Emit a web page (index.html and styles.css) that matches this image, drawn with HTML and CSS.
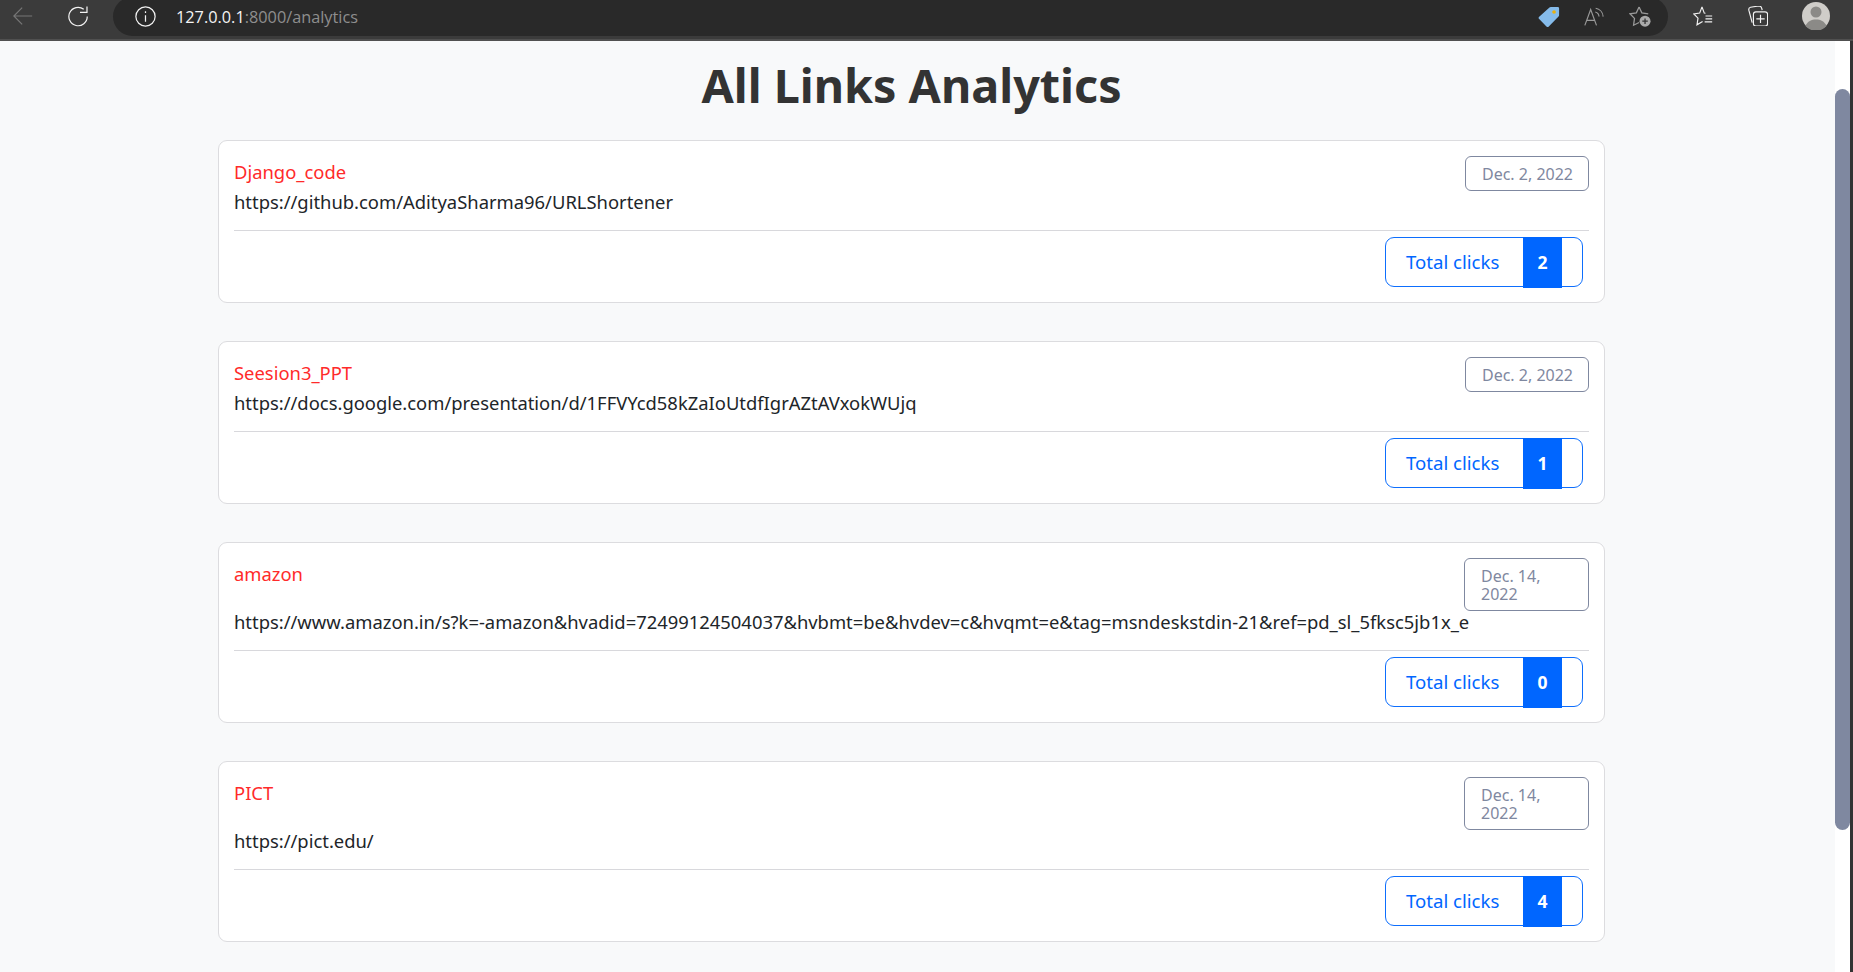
FILE: index.html
```html
<!DOCTYPE html>
<html lang="en">
<head>
  <meta charset="UTF-8" />
  <title>All Links Analytics</title>
  <link rel="stylesheet" href="styles.css">
</head>
<body>

  <header class="toolbar">
    <svg class="tool-icon back" viewBox="0 0 24 24"><path d="M23 12H1M11 2L1 12l10 10"/></svg>
    <svg class="tool-icon reload" viewBox="0 0 24 24"><path d="M22 12a10.500 10.500 0 1 1-4-8.200M21.700 .6v6.800h-8"/></svg>
    <div class="omnibox">
      <svg class="tool-icon info" viewBox="0 0 24 24"><circle cx="12" cy="12" r="11"/><path d="M12 10.500v7.500M12 6v2"/></svg>
      <span class="url"><span class="host">127.0.0.1</span>:8000/analytics</span>
      <svg class="tag" viewBox="0 0 24 24"><path d="M14 1h7.500a1.500 1.500 0 0 1 1.500 1.500V10a2 2 0 0 1-.6 1.400L11.500 22.500a1.500 1.500 0 0 1-2 0L1 14a1.500 1.500 0 0 1 0-2L12.500 1.600A2 2 0 0 1 14 1z" fill="#85bbea"/><circle cx="17.500" cy="6.500" r="2" fill="#e8b00c"/></svg>
      <svg class="tool-icon dim aloud" viewBox="0 0 24 24"><path d="M1 22L8 3l7 19M3.500 16h9M14 1.500a11 11 0 0 1 9 10M13.500 6a6 6 0 0 1 4.500 5.500"/></svg>
      <svg class="tool-icon dim star-add" viewBox="0 0 24 24"><path d="M11 1L8 7.500l-7 1 5 5L5 21l6-3M11 1l3 6.500 7 1"/><circle cx="17.500" cy="16.500" r="6" fill="#aaa" stroke="none"/><path d="M17.500 13.500v6M14.500 16.500h6" stroke="#333"/></svg>
    </div>
    <svg class="tool-icon fav" viewBox="0 0 24 24"><path d="M10.800 1L8 8.500l-7 1 5 5-1.200 8 6.700-4M10.800 1l2.700 7.500 1.500 .2M15 12h8M15 15.500h8M14 19h9"/></svg>
    <svg class="tool-icon coll" viewBox="0 0 24 24"><path d="M5 20L1 5q-.5-3 2-3.500L13 0q3 0 3.500 3L17 5"/><rect x="6.500" y="7" width="17" height="17" rx="3"/><path d="M15 10.500v10M10 15.500h10"/></svg>
    <svg class="avatar" viewBox="0 0 28 28"><circle cx="14" cy="14" r="14" fill="#cfcdc9"/><circle cx="14" cy="10" r="5.500" fill="#8b8a87"/><path d="M3.500 24c2-5 6-6.500 10.500-6.500s8.500 1.500 10.500 6.500A14 14 0 0 1 3.500 24z" fill="#8b8a87"/></svg>
  </header>

  <div class="page">
    <main class="content">
      <h1>All Links Analytics</h1>

      <div class="links">
        <section class="card">
          <div class="card-head">
            <a class="link-name" href="#">Django_code</a>
            <span class="date">Dec. 2, 2022</span>
          </div>
          <p class="link-url">https://github.com/AdityaSharma96/URLShortener</p>
          <div class="card-bottom">
            <button class="clicks">Total clicks <span class="count">2</span></button>
          </div>
        </section>

        <section class="card">
          <div class="card-head">
            <a class="link-name" href="#">Seesion3_PPT</a>
            <span class="date">Dec. 2, 2022</span>
          </div>
          <p class="link-url">https://docs.google.com/presentation/d/1FFVYcd58kZaIoUtdfIgrAZtAVxokWUjq</p>
          <div class="card-bottom">
            <button class="clicks">Total clicks <span class="count">1</span></button>
          </div>
        </section>

        <section class="card">
          <div class="card-head">
            <a class="link-name" href="#">amazon</a>
            <span class="date date-wrap">Dec. 14, 2022</span>
          </div>
          <p class="link-url">https://www.amazon.in/s?k=-amazon&amp;hvadid=72499124504037&amp;hvbmt=be&amp;hvdev=c&amp;hvqmt=e&amp;tag=msndeskstdin-21&amp;ref=pd_sl_5fksc5jb1x_e</p>
          <div class="card-bottom">
            <button class="clicks">Total clicks <span class="count">0</span></button>
          </div>
        </section>

        <section class="card">
          <div class="card-head">
            <a class="link-name" href="#">PICT</a>
            <span class="date date-wrap">Dec. 14, 2022</span>
          </div>
          <p class="link-url">https://pict.edu/</p>
          <div class="card-bottom">
            <button class="clicks">Total clicks <span class="count">4</span></button>
          </div>
        </section>
      </div>
    </main>

    <div class="scrollbar"><div class="thumb"></div></div>
  </div>

</body>
</html>
```

FILE: styles.css
```css
html, body {
  height: 100%;
}
body {
  margin: 0;
  font-family: "Noto Sans", sans-serif;
  background: #f8f9fa;
  color: #212529;
  overflow: hidden;
}

/* browser chrome */
.toolbar {
  height: 32px;
  padding-bottom: 7px;
  border-bottom: 2px solid #505050;
  background: #3b3b3b;
  display: flex;
  align-items: center;
  padding-left: 13px;
}
.tool-icon {
  width: 20px;
  height: 20px;
  fill: none;
  stroke: #f2f2f2;
  stroke-width: 1.4;
  flex: none;
}
.back {
  stroke: #777;
}
.reload {
  width: 21px;
  height: 21px;
  margin-left: 35px;
}
.omnibox {
  flex: none;
  align-self: flex-start;
  width: 1555px;
  height: 39px;
  margin: -3px 0 0 24px;
  padding: 0 17px 0 22px;
  box-sizing: border-box;
  background: #292929;
  border-radius: 20px;
  display: flex;
  align-items: center;
}
.info {
  width: 21px;
  height: 21px;
}
.url {
  margin-left: 20px;
  font-family: "Open Sans", sans-serif;
  font-size: 16.300px;
  color: #8e8e8e;
  flex: 1;
}
.host {
  color: #f4f4f4;
}
.tag {
  flex: none;
  width: 22px;
  height: 22px;
}
.dim {
  stroke: #999;
}
.aloud {
  margin: 0 25px 0 24px;
}
.star-add {
  width: 22px;
  height: 22px;
}
.fav {
  margin-left: 25px;
}
.coll {
  margin-left: 35px;
}
.avatar {
  flex: none;
  width: 28px;
  height: 28px;
  margin-left: 34px;
}

/* page */
.page {
  height: calc(100% - 41px);
  display: flex;
}
.content {
  flex: 1;
  padding: 0 230px 0 218px;
  min-width: 0;
}
h1 {
  margin: 0;
  height: 99px;
  line-height: 88px;
  text-align: center;
  font-size: 46.700px;
  font-weight: 700;
  color: #333;
}
.links {
  display: flex;
  flex-direction: column;
  gap: 38px;
}
.card {
  background: #fff;
  border: 1px solid #dcdcdf;
  border-radius: 9px;
  padding: 15px;
}
.card-head {
  display: flex;
  align-items: flex-start;
  justify-content: space-between;
}
.link-name {
  margin-top: 3px;
  color: #ff2a2a;
  font-size: 18.400px;
  line-height: 26px;
  text-decoration: none;
}
.link-url {
  margin: -2px 0 0;
  padding-bottom: 15px;
  border-bottom: 1px solid #d8d8dc;
  font-size: 18.400px;
  line-height: 26px;
  white-space: nowrap;
}
.date {
  flex: none;
  box-sizing: border-box;
  border: 1px solid #7f88a0;
  border-radius: 6px;
  color: #7f88a0;
  font-size: 16px;
  line-height: 18px;
  padding: 8px 15px 7px 16px;
  white-space: nowrap;
}
.date-wrap {
  width: 125px;
  height: 53px;
  white-space: normal;
}
.card-bottom {
  display: flex;
  justify-content: flex-end;
  padding: 6px 6px 0 0;
}
.clicks {
  width: 198px;
  height: 50px;
  padding: 0 0 2px 20px;
  background: #fff;
  border: 1px solid #0d6efd;
  border-radius: 9px;
  color: #0066ff;
  font-family: inherit;
  font-size: 18.600px;
  display: flex;
  align-items: center;
}
.count {
  margin-left: auto;
  margin-right: 20px;
  margin-bottom: -2px;
  width: 39px;
  height: 51px;
  background: #0066ff;
  color: #fff;
  font-size: 17.500px;
  font-weight: 700;
  display: flex;
  align-items: center;
  justify-content: center;
}

.scrollbar {
  width: 18px;
  flex: none;
  box-sizing: border-box;
  background: #fff;
  border-right: 3px solid #333;
}
.thumb {
  margin-top: 48px;
  height: 741px;
  background: #7f88a0;
  border-radius: 8px;
}
```
